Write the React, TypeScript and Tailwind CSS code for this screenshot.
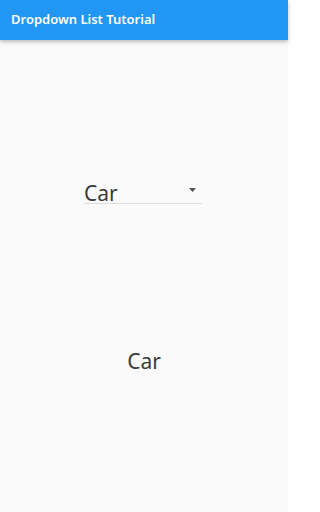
import { useState } from 'react';

export default function App() {
  const [vehicle] = useState('Car');

  return (
    <div className="w-[288px] h-[512px] bg-[#fafafa] flex flex-col" style={{ fontFamily: '"Noto Sans", "Open Sans", sans-serif' }}>
      <header className="h-10 bg-[#2196f3] flex items-center px-[11px] shadow-[0_2px_4px_rgba(0,0,0,0.25)] z-10">
        <h1 className="text-white text-[13px] font-semibold">Dropdown List Tutorial</h1>
      </header>
      <main className="flex-1 flex flex-col items-center">
        <div className="mt-[140px] ml-[-2px] w-[118px] h-6 relative border-b border-[#dcdcdc] flex items-end">
          <span className="text-[21px] leading-6 text-[#3a3a3a] translate-y-[2px]">{vehicle}</span>
          <svg className="absolute right-[6px] top-[8px]" width="7" height="4" viewBox="0 0 7 4">
            <path d="M0 0h7L3.5 4z" fill="#555" />
          </svg>
        </div>
        <p className="mt-[145px] text-[21px] leading-6 text-[#3a3a3a]">{vehicle}</p>
      </main>
    </div>
  );
}
